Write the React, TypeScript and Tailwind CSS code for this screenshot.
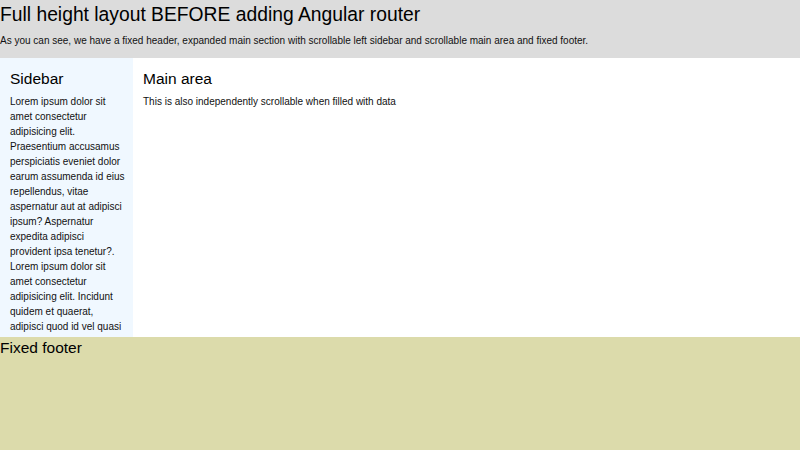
export default function App() {
  return (
    <div className="flex h-screen flex-col font-['Liberation_Sans',Arial,sans-serif] text-black">
      <header className="h-[58px] shrink-0 bg-[#dcdcdc]">
        <h1 className="m-0 pt-[2px] text-[19.3px] leading-[26px]">Full height layout BEFORE adding Angular router</h1>
        <p className="mt-[5px] text-[10px] leading-[15px] text-[#111]">
          As you can see, we have a fixed header, expanded main section with scrollable left sidebar and scrollable main area and fixed footer.
        </p>
      </header>
      <section className="flex min-h-0 flex-1">
        <aside className="w-[133px] shrink-0 overflow-auto bg-[#f0f8ff] pl-[10px] pr-[7px] pt-[11px]">
          <h2 className="text-[15.5px] leading-[20px]">Sidebar</h2>
          <p className="mt-[5px] text-[10px] leading-[15px] text-[#111]">
            Lorem ipsum dolor sit amet consectetur adipisicing elit. Praesentium accusamus perspiciatis eveniet dolor
            earum assumenda id eius repellendus, vitae aspernatur aut at adipisci ipsum? Aspernatur expedita adipisci
            provident ipsa tenetur?. Lorem ipsum dolor sit amet consectetur adipisicing elit. Incidunt quidem et quaerat,
            adipisci quod id vel quasi
          </p>
        </aside>
        <main className="flex-1 overflow-auto bg-white px-[10px] pt-[11px]">
          <h2 className="text-[15.5px] leading-[20px]">Main area</h2>
          <p className="mt-[5px] text-[10px] leading-[15px] text-[#111]">This is also independently scrollable when filled with data</p>
        </main>
      </section>
      <footer className="h-[113px] shrink-0 bg-[#dcdbab] pt-[1px]">
        <h2 className="text-[15.5px] leading-[20px]">Fixed footer</h2>
      </footer>
    </div>
  );
}
